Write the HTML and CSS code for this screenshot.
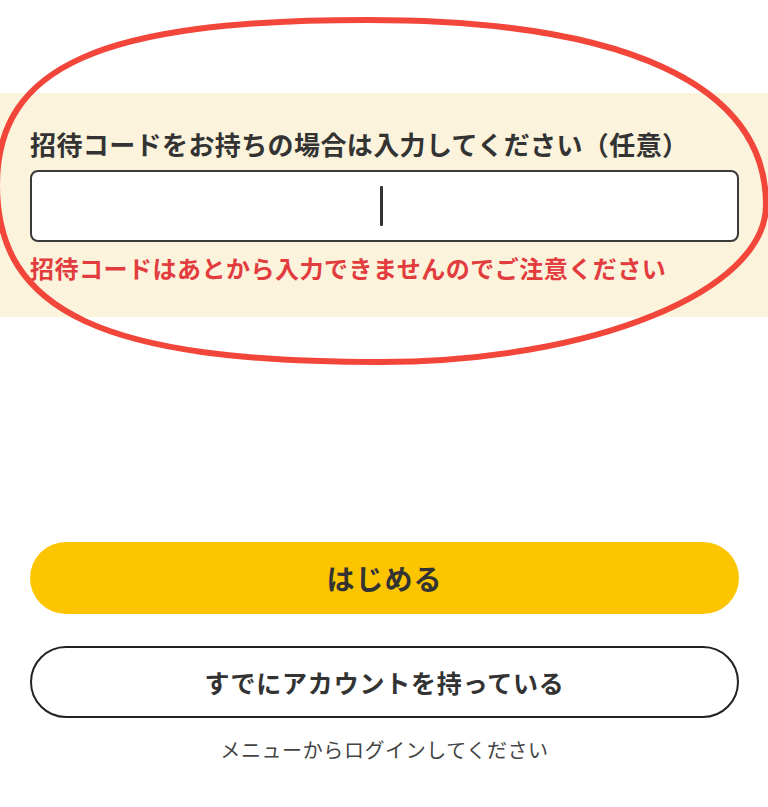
FILE: index.html
```html
<!DOCTYPE html>
<html lang="ja">
<head>
<meta charset="utf-8">
<link rel="stylesheet" href="styles.css">
</head>
<body>
<div class="page">
  <section class="invite">
    <p class="invite-label">招待コードをお持ちの場合は入力してください（任意）</p>
    <div class="invite-input"><span class="caret"></span></div>
    <p class="invite-note">招待コードはあとから入力できませんのでご注意ください</p>
  </section>
  <div class="actions">
    <button class="btn btn-primary">はじめる</button>
    <button class="btn btn-outline">すでにアカウントを持っている</button>
    <p class="hint">メニューからログインしてください</p>
  </div>
  <svg class="annotation" width="768" height="807" viewBox="0 0 768 807">
    <path d="M -3 185 C -3 66, 101 20, 367 20 C 626 20, 766 85, 766 205 C 766 291, 592 362, 380 362 C 104 362, -3 312, -3 185 Z" fill="none" stroke="#f2463b" stroke-width="6"/>
  </svg>
</div>
</body>
</html>
```

FILE: styles.css
```css
html, body {
  margin: 0;
  padding: 0;
  background: #ffffff;
}

body {
  font-family: "Noto Sans CJK JP", "Noto Sans", sans-serif;
  color: #333333;
}

.page {
  position: relative;
  width: 768px;
  height: 807px;
  overflow: hidden;
  padding-top: 93px;
  box-sizing: border-box;
}

.invite {
  background: #fbf3dc;
  height: 224px;
  box-sizing: border-box;
  padding: 34px 29px 0 30px;
  display: flex;
  flex-direction: column;
}

.invite-label {
  margin: 0;
  font-size: 26px;
  line-height: 34px;
  font-weight: 700;
  letter-spacing: 0.4px;
  color: #333333;
  white-space: nowrap;
}

.invite-input {
  margin-top: 9px;
  height: 72px;
  box-sizing: border-box;
  border: 2px solid #3a3a3a;
  border-radius: 8px;
  background: #ffffff;
  display: flex;
  align-items: center;
  justify-content: center;
}

.caret {
  display: block;
  width: 3px;
  height: 40px;
  background: #333333;
  border-radius: 1px;
  margin-right: 6px;
}

.invite-note {
  margin: 11px 0 0;
  font-size: 24px;
  line-height: 30px;
  font-weight: 700;
  letter-spacing: 0.5px;
  color: #e23c3e;
  white-space: nowrap;
}

.actions {
  margin-top: 225px;
  padding: 0 29px 0 30px;
  display: flex;
  flex-direction: column;
  align-items: stretch;
}

.btn {
  height: 72px;
  border-radius: 36px;
  font-family: "Noto Sans CJK JP", "Noto Sans", sans-serif;
  font-weight: 700;
  color: #333333;
  display: flex;
  align-items: center;
  justify-content: center;
  padding: 0;
  box-sizing: border-box;
}

.btn-primary {
  background: #fcc500;
  border: none;
  font-size: 28px;
  letter-spacing: 1px;
}

.btn-outline {
  margin-top: 32px;
  background: #ffffff;
  border: 2px solid #222222;
  font-size: 25px;
  letter-spacing: 0.8px;
}

.hint {
  margin: 18px 0 0;
  text-align: center;
  font-size: 20px;
  line-height: 28px;
  letter-spacing: 0.6px;
  color: #444444;
}

.annotation {
  position: absolute;
  top: 0;
  left: 0;
  pointer-events: none;
  overflow: visible;
}
```
